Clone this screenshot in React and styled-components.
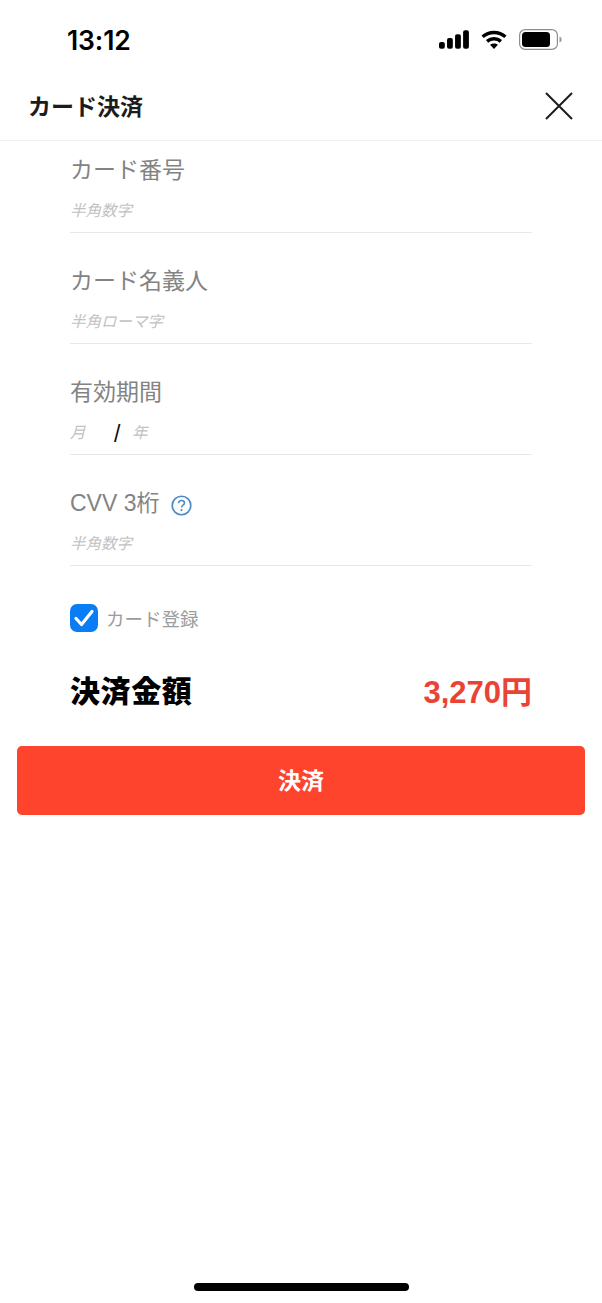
import React from "react";
import styled, { createGlobalStyle } from "styled-components";

const Global = createGlobalStyle`
  html, body { margin: 0; padding: 0; background: #fff; }
  body { font-family: "Liberation Sans", "Noto Sans CJK JP", sans-serif; }
`;
const Page = styled.div`
  width: 602px; height: 1303px; display: flex; flex-direction: column; background: #fff; overflow: hidden;
`;
const StatusBar = styled.div`
  height: 72px; box-sizing: border-box; padding: 7px 40px 0 67px; display: flex; align-items: center; justify-content: space-between; flex: none;
`;
const Time = styled.div`
  font-family: "Inter", "Liberation Sans", sans-serif; font-size: 26.5px; font-weight: 600; color: #000; letter-spacing: -0.1px;
`;
const StatusIcons = styled.div`
  display: flex; align-items: center; gap: 12px;
`;
const Header = styled.div`
  height: 69px; box-sizing: border-box; border-bottom: 1px solid #f0f0f0; flex: none; display: flex; align-items: center; justify-content: space-between; padding: 0 28px 0 28px;
`;
const Title = styled.div`
  font-size: 23px; font-weight: 700; color: #1c1c1c; font-family: "Noto Sans CJK JP", sans-serif; margin-bottom: 2px;
`;
const CloseWrap = styled.div`
  display: flex;
`;
const Form = styled.div`
  padding: 0 70px; display: flex; flex-direction: column; flex: none;
`;
const Field = styled.div`
  height: 92px; box-sizing: border-box; border-bottom: 1px solid #e8e8e8; margin-bottom: 19px; display: flex; flex-direction: column;
`;
const Label = styled.div`
  height: 58px; display: flex; align-items: center; gap: 12px; font-size: 23px; color: #838383; font-family: "Liberation Sans", "Noto Sans CJK JP", sans-serif; padding-bottom: 5px; box-sizing: border-box;
`;
const HelpWrap = styled.span`
  display: flex; margin-top: 9px;
`;
const HintRow = styled.div`
  display: flex; align-items: center; height: 20px;
`;
const Hint = styled.span`
  font-size: 15.5px; font-style: italic; color: #c2c2c2; font-family: "Noto Sans CJK JP", sans-serif; line-height: 20px;
  width: ${(p) => p.$width || "auto"};
`;
const Slash = styled.span`
  font-size: 23px; font-style: normal; color: #111; width: 18px; line-height: 20px; margin-top: 5px; font-family: "Liberation Sans", sans-serif;
`;
const CheckRow = styled.div`
  display: flex; align-items: center; gap: 8px; height: 28px; margin-top: 19px;
`;
const CheckBox = styled.div`
  width: 28px; height: 28px; border-radius: 7px; background: #0a7cf5; display: flex; align-items: center; justify-content: center;
`;
const CheckLabel = styled.span`
  font-size: 18.5px; color: #9c9c9c; font-family: "Noto Sans CJK JP", sans-serif;
`;
const TotalRow = styled.div`
  display: flex; align-items: center; justify-content: space-between; margin-top: 37px; height: 40px;
`;
const TotalLabel = styled.div`
  font-size: 30px; font-weight: 900; color: #000; font-family: "Noto Sans CJK JP", sans-serif; letter-spacing: 0.6px;
`;
const TotalValue = styled.div`
  font-size: 31px; font-weight: 700; color: #ea4335; font-family: "Liberation Sans", "Noto Sans CJK JP", sans-serif;
`;
const PayButton = styled.button`
  margin: 37px 17px 0; height: 69px; flex: none; border: none; border-radius: 5px; background: #ff442d; color: #fff; font-size: 23px; font-weight: 700; font-family: "Noto Sans CJK JP", sans-serif; padding: 0 0 4px;
`;
const HomeBarWrap = styled.div`
  flex: 1; display: flex; align-items: flex-end; justify-content: center; padding-bottom: 12px;
`;
const HomeBar = styled.div`
  width: 215px; height: 8px; border-radius: 4px; background: #000;
`;

const Signal = () => (
  <svg width="30" height="19" viewBox="0 0 31 19">
    <rect x="0" y="12" width="6" height="7" rx="2" fill="#000" />
    <rect x="8.3" y="8" width="6" height="11" rx="2" fill="#000" />
    <rect x="16.6" y="4" width="6" height="15" rx="2" fill="#000" />
    <rect x="24.9" y="0" width="6" height="19" rx="2" fill="#000" />
  </svg>
);
const Wifi = () => (
  <svg width="26" height="19" viewBox="0 0 27 20" fill="none">
    <path d="M1.5 7.2C8.2 1.2 18.8 1.2 25.5 7.2" stroke="#000" strokeWidth="3.6" strokeLinecap="butt" />
    <path d="M6.2 12C10.4 8.3 16.6 8.3 20.8 12" stroke="#000" strokeWidth="3.6" />
    <path d="M13.5 20L9.4 15.6C11.7 13.8 15.3 13.8 17.6 15.6Z" fill="#000" />
  </svg>
);
const Battery = () => (
  <svg width="43" height="21" viewBox="0 0 43 21" fill="none">
    <rect x="0.6" y="0.6" width="37.8" height="19.8" rx="5.5" stroke="#8e8e8e" strokeWidth="1.2" />
    <rect x="3" y="3" width="28" height="15" rx="3.5" fill="#000" />
    <path d="M40.5 7.5C42 8 42.6 9 42.6 10.5C42.6 12 42 13 40.5 13.5Z" fill="#9a9a9a" />
  </svg>
);
const CloseIcon = () => (
  <svg width="30" height="30" viewBox="0 0 30 30" fill="none">
    <path d="M2 2L28 28M28 2L2 28" stroke="#1c1c1c" strokeWidth="2" />
  </svg>
);
const HelpIcon = () => (
  <svg width="21" height="21" viewBox="0 0 20 20" fill="none">
    <circle cx="10" cy="10" r="8.8" stroke="#4a8ac9" strokeWidth="1.6" />
    <path d="M7.2 7.8C7.2 6.2 8.4 5.2 10 5.2C11.6 5.2 12.8 6.2 12.8 7.6C12.8 9.6 10 9.6 10 11.8" stroke="#4a8ac9" strokeWidth="1.5" />
    <circle cx="10" cy="14.4" r="1" fill="#4a8ac9" />
  </svg>
);
const CheckIcon = () => (
  <svg width="22" height="20" viewBox="0 0 22 20" fill="none">
    <path d="M3 10.5L8.5 16.5L19 3.5" stroke="#fff" strokeWidth="3.2" strokeLinecap="round" strokeLinejoin="round" />
  </svg>
);

export default function App() {
  return (
    <Page>
      <Global />
      <StatusBar>
        <Time>13:12</Time>
        <StatusIcons>
          <Signal />
          <Wifi />
          <Battery />
        </StatusIcons>
      </StatusBar>
      <Header>
        <Title>カード決済</Title>
        <CloseWrap><CloseIcon /></CloseWrap>
      </Header>
      <Form>
        <Field>
          <Label>カード番号</Label>
          <HintRow><Hint>半角数字</Hint></HintRow>
        </Field>
        <Field>
          <Label>カード名義人</Label>
          <HintRow><Hint>半角ローマ字</Hint></HintRow>
        </Field>
        <Field>
          <Label>有効期間</Label>
          <HintRow>
            <Hint $width="44px">月</Hint>
            <Slash>/</Slash>
            <Hint>年</Hint>
          </HintRow>
        </Field>
        <Field>
          <Label>CVV 3桁<HelpWrap><HelpIcon /></HelpWrap></Label>
          <HintRow><Hint>半角数字</Hint></HintRow>
        </Field>
        <CheckRow>
          <CheckBox><CheckIcon /></CheckBox>
          <CheckLabel>カード登録</CheckLabel>
        </CheckRow>
        <TotalRow>
          <TotalLabel>決済金額</TotalLabel>
          <TotalValue>3,270円</TotalValue>
        </TotalRow>
      </Form>
      <PayButton>決済</PayButton>
      <HomeBarWrap><HomeBar /></HomeBarWrap>
    </Page>
  );
}
